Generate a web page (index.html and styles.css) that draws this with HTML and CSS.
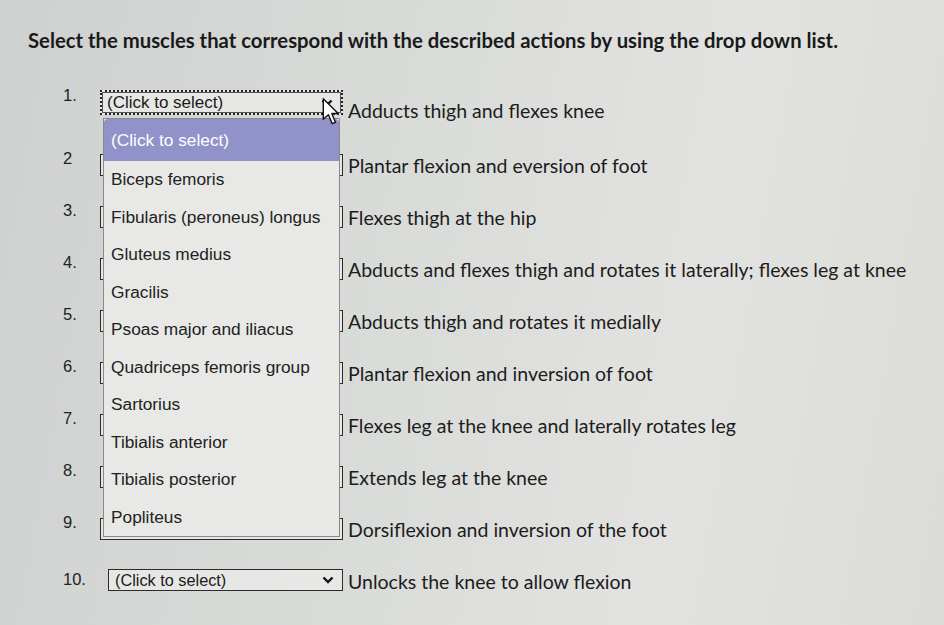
FILE: index.html
```html
<!DOCTYPE html>
<html>
<head>
<meta charset="utf-8">
<link rel="stylesheet" href="styles.css">
</head>
<body>
<div class="page">
  <h1 class="title">Select the muscles that correspond with the described actions by using the drop down list.</h1>
  <div class="rows">
    <div class="row first">
      <span class="num">1.</span>
      <div class="sel focus"><span>(Click to select)</span><svg class="chev" viewBox="0 0 12 8" width="12" height="8"><path d="M1.5 1.5 L6 6 L10.5 1.5" fill="none" stroke="#111" stroke-width="2.4"/></svg></div>
      <span class="desc">Adducts thigh and flexes knee</span>
    </div>
    <div class="row"><span class="num">2</span><div class="sel"></div><span class="desc">Plantar flexion and eversion of foot</span></div>
    <div class="row"><span class="num">3.</span><div class="sel"></div><span class="desc">Flexes thigh at the hip</span></div>
    <div class="row"><span class="num">4.</span><div class="sel"></div><span class="desc">Abducts and flexes thigh and rotates it laterally; flexes leg at knee</span></div>
    <div class="row"><span class="num">5.</span><div class="sel"></div><span class="desc">Abducts thigh and rotates it medially</span></div>
    <div class="row"><span class="num">6.</span><div class="sel"></div><span class="desc">Plantar flexion and inversion of foot</span></div>
    <div class="row"><span class="num">7.</span><div class="sel"></div><span class="desc">Flexes leg at the knee and laterally rotates leg</span></div>
    <div class="row"><span class="num">8.</span><div class="sel"></div><span class="desc">Extends leg at the knee</span></div>
    <div class="row"><span class="num">9.</span><div class="sel"></div><span class="desc">Dorsiflexion and inversion of the foot</span></div>
    <div class="row last">
      <span class="num">10.</span>
      <div class="sel"><span>(Click to select)</span><svg class="chev" viewBox="0 0 12 8" width="12" height="8"><path d="M1.5 1.5 L6 6 L10.5 1.5" fill="none" stroke="#111" stroke-width="2.4"/></svg></div>
      <span class="desc">Unlocks the knee to allow flexion</span>
    </div>
  </div>
  <ul class="menu">
    <li class="opt hl">(Click to select)</li>
    <li class="opt">Biceps femoris</li>
    <li class="opt">Fibularis (peroneus) longus</li>
    <li class="opt">Gluteus medius</li>
    <li class="opt">Gracilis</li>
    <li class="opt">Psoas major and iliacus</li>
    <li class="opt">Quadriceps femoris group</li>
    <li class="opt">Sartorius</li>
    <li class="opt">Tibialis anterior</li>
    <li class="opt">Tibialis posterior</li>
    <li class="opt">Popliteus</li>
  </ul>
  <svg class="cursor" viewBox="0 0 14 22" width="18" height="29"><path d="M1 1 L1 17 L5 13.5 L8 20.5 L10.5 19.5 L7.6 12.6 L12.6 12.6 Z" fill="#fff" stroke="#111" stroke-width="1.1" stroke-linejoin="round"/></svg>
</div>
</body>
</html>
```
FILE: styles.css
```css
html, body {
  margin: 0;
  padding: 0;
}
body {
  width: 944px;
  height: 625px;
  overflow: hidden;
  background: linear-gradient(100deg, #cfd1d0 0%, #d9dbd9 40%, #e2e3e0 72%, #dbdbd7 100%);
}
.page {
  position: relative;
  width: 944px;
  height: 625px;
  padding: 28px 0 0 28px;
  box-sizing: border-box;
}
.title {
  margin: 0;
  font-family: Lato, "Open Sans", sans-serif;
  font-weight: 700;
  font-size: 20.3px;
  letter-spacing: 0;
  color: #1a1a1a;
  line-height: 24px;
}
.rows {
  margin-top: 30px;
  display: flex;
  flex-direction: column;
}
.row {
  height: 52px;
  display: flex;
  align-items: center;
}
.row.first { height: 57px; }
.num {
  width: 72px;
  padding-left: 35px;
  box-sizing: border-box;
  margin-bottom: 14px;
  font-family: "Liberation Sans", Arial, sans-serif;
  font-size: 16.5px;
  color: #222;
}
.first .num { margin-bottom: 30px; }
.last .num { margin-bottom: 4px; }
.sel {
  width: 243px;
  height: 22px;
  box-sizing: border-box;
  border: 1.5px solid #2b2b2b;
  background: #e7e8e5;
  display: flex;
  align-items: center;
  justify-content: space-between;
  padding: 0 8px 0 6px;
  font-family: "Liberation Sans", Arial, sans-serif;
  font-size: 16.3px;
  color: #1a1a1a;
}
.first .sel {
  height: 25px;
  margin-bottom: 16px;
  border: 2px dotted #222;
  box-shadow: inset 0 0 0 1px #555;
  font-size: 17px;
  padding-left: 5px;
}
.last .sel { margin-left: 8px; width: 235px; margin-bottom: 2px; }
.desc {
  margin-left: 5px;
  font-family: Lato, "Open Sans", sans-serif;
  font-size: 19.5px;
  letter-spacing: 0;
  color: #1c1c1c;
}
.menu {
  position: absolute;
  left: 103px;
  top: 118px;
  width: 237px;
  margin: 0;
  padding: 0;
  list-style: none;
  background: #e8e9e6;
  border: 1px solid #8a8a8a;
  box-sizing: border-box;
}
.opt {
  height: 37.5px;
  display: flex;
  align-items: center;
  padding-left: 7px;
  font-family: "Liberation Sans", Arial, sans-serif;
  font-size: 17.3px;
  color: #222;
}
.opt.hl {
  height: 42px;
  background: #9092c9;
  color: #fff;
  border-radius: 4px 4px 0 0;
}
.cursor {
  position: absolute;
  left: 322px;
  top: 97px;
}
```
